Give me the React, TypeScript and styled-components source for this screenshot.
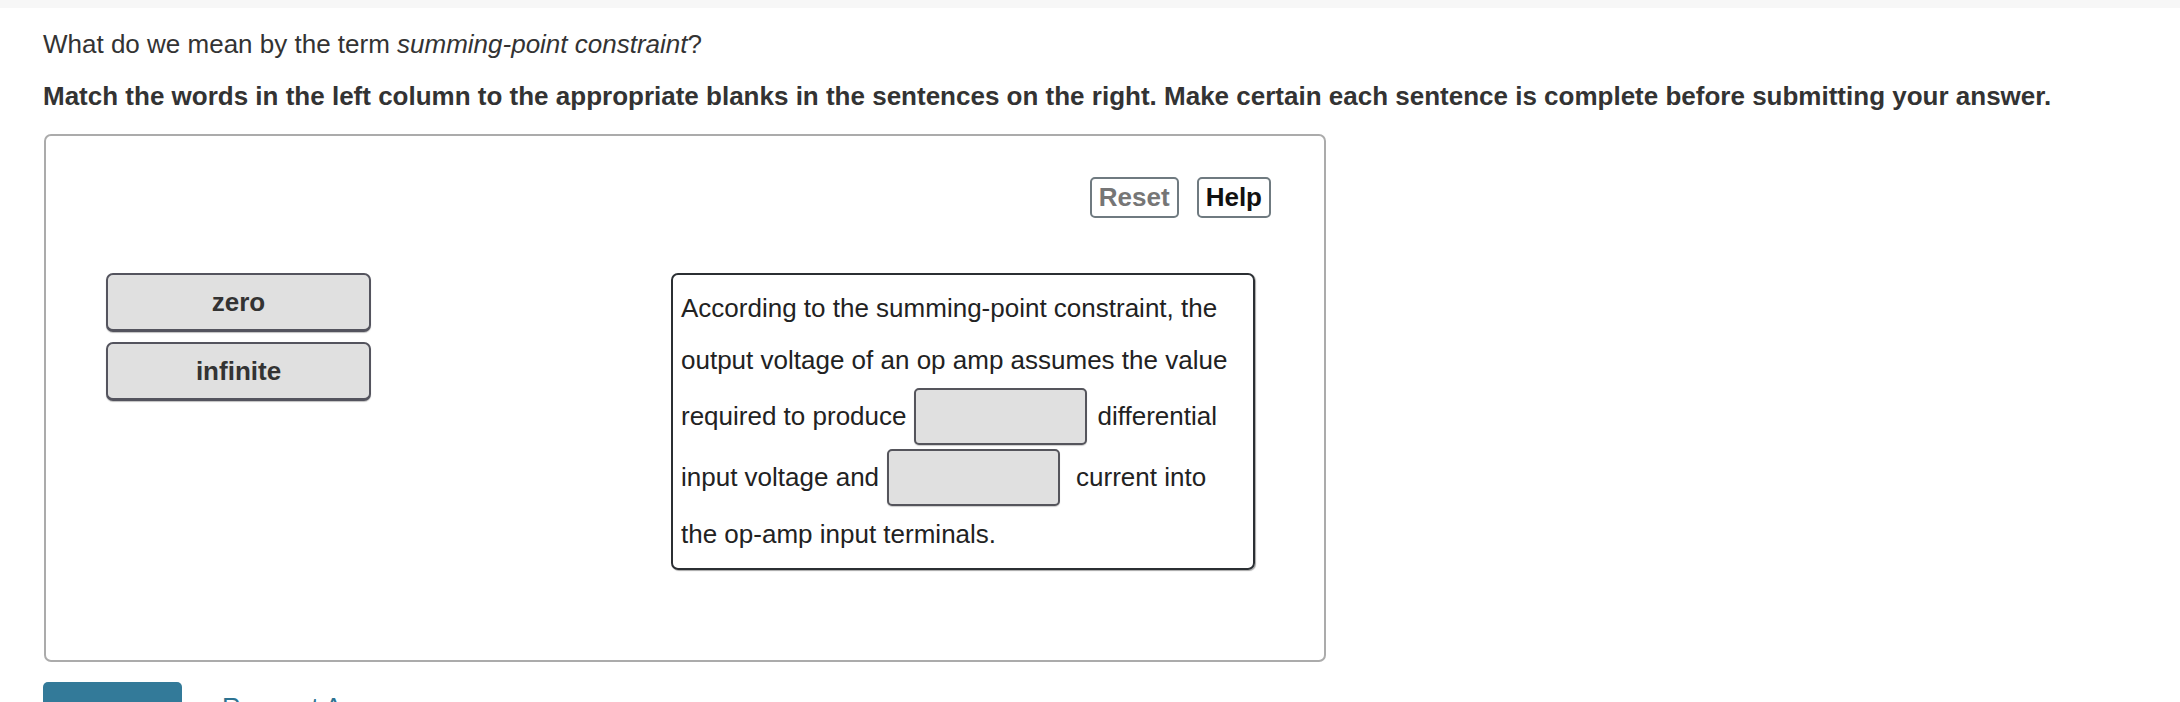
import React from "react";
import styled, { createGlobalStyle } from "styled-components";

const GlobalStyle = createGlobalStyle`
  html, body {
    margin: 0;
    padding: 0;
    background: #ffffff;
    font-family: "Liberation Sans", Arial, Helvetica, sans-serif;
    color: #333333;
  }
  * { box-sizing: border-box; }
`;

const TopBand = styled.div`
  height: 8px;
  background: #f7f7f7;
`;

const Page = styled.div`
  padding: 0 0 0 43px;
`;

const Question = styled.p`
  margin: 20px 0 0 0;
  font-size: 26px;
  line-height: 32px;
  color: #333333;
`;

const Instruction = styled.p`
  margin: 20px 0 0 0;
  font-size: 26px;
  line-height: 32px;
  font-weight: 700;
  color: #333333;
`;

const Panel = styled.div`
  margin: 22px 0 0 1px;
  width: 1282px;
  height: 528px;
  border: 2px solid #ababab;
  border-radius: 7px;
  display: flex;
  flex-direction: column;
`;

const Toolbar = styled.div`
  display: flex;
  justify-content: flex-end;
  gap: 18px;
  padding: 41px 53px 0 0;
`;

const ToolButton = styled.button<{ $muted?: boolean }>`
  height: 41px;
  padding: 0 7px;
  border: 2px solid #6f7a80;
  border-radius: 5px;
  background: #ffffff;
  font-family: "Liberation Sans", Arial, sans-serif;
  font-size: 26px;
  font-weight: 700;
  color: ${(p) => (p.$muted ? "#767676" : "#111111")};
  cursor: pointer;
`;

const Workspace = styled.div`
  display: flex;
  align-items: flex-start;
  gap: 300px;
  padding: 55px 0 0 60px;
`;

const ChipColumn = styled.div`
  display: flex;
  flex-direction: column;
  gap: 10px;
  width: 265px;
`;

const Chip = styled.div`
  height: 59px;
  display: flex;
  align-items: center;
  justify-content: center;
  background: #e0e0e0;
  border: 2px solid #54545e;
  border-bottom-width: 3px;
  border-radius: 7px;
  box-shadow: 0 1px 1px rgba(0, 0, 0, 0.25);
  font-size: 26px;
  font-weight: 700;
  color: #333333;
`;

const SentenceBox = styled.div`
  width: 584px;
  border: 2px solid #2b2f33;
  border-radius: 7px;
  box-shadow: 1px 1px 1px rgba(0, 0, 0, 0.35);
  padding: 7px 8px 8px 8px;
`;

const Line = styled.div`
  display: flex;
  align-items: center;
  min-height: 52px;
  font-size: 26px;
  color: #222222;
  white-space: nowrap;
`;

const Blank = styled.div<{ $before: number; $after: number }>`
  width: 173px;
  height: 57px;
  margin: 2px ${(p) => p.$after}px 2px ${(p) => p.$before}px;
  background: #e0e0e0;
  border: 2px solid #55555c;
  border-radius: 5px;
  box-shadow: 0 1px 1px rgba(0, 0, 0, 0.2);
`;

const Actions = styled.div`
  display: flex;
  align-items: flex-start;
  gap: 40px;
  margin-top: 20px;
`;

const SubmitButton = styled.button`
  width: 139px;
  height: 54px;
  padding: 10px 0 0 0;
  border: none;
  border-radius: 5px;
  background: #337a99;
  color: #ffffff;
  font-family: "Liberation Sans", Arial, sans-serif;
  font-size: 26px;
  line-height: 30px;
  font-weight: 700;
  text-align: center;
  align-self: flex-start;
`;

const RequestLink = styled.a`
  padding-top: 10px;
  font-size: 26px;
  color: #2c7391;
  text-decoration: none;
  line-height: 30px;
`;

export default function App() {
  return (
    <>
      <GlobalStyle />
      <TopBand />
      <Page>
        <Question>
          What do we mean by the term <em>summing-point constraint</em>?
        </Question>
        <Instruction>
          Match the words in the left column to the appropriate blanks in the sentences on the right. Make certain each sentence is complete before submitting your answer.
        </Instruction>
        <Panel>
          <Toolbar>
            <ToolButton $muted>Reset</ToolButton>
            <ToolButton>Help</ToolButton>
          </Toolbar>
          <Workspace>
            <ChipColumn>
              <Chip>zero</Chip>
              <Chip>infinite</Chip>
            </ChipColumn>
            <SentenceBox>
              <Line>According to the summing-point constraint, the</Line>
              <Line>output voltage of an op amp assumes the value</Line>
              <Line>
                required to produce
                <Blank $before={8} $after={10} />
                differential
              </Line>
              <Line>
                input voltage and
                <Blank $before={8} $after={16} />
                current into
              </Line>
              <Line>the op-amp input terminals.</Line>
            </SentenceBox>
          </Workspace>
        </Panel>
        <Actions>
          <SubmitButton>Submit</SubmitButton>
          <RequestLink href="#">Request Answer</RequestLink>
        </Actions>
      </Page>
    </>
  );
}
